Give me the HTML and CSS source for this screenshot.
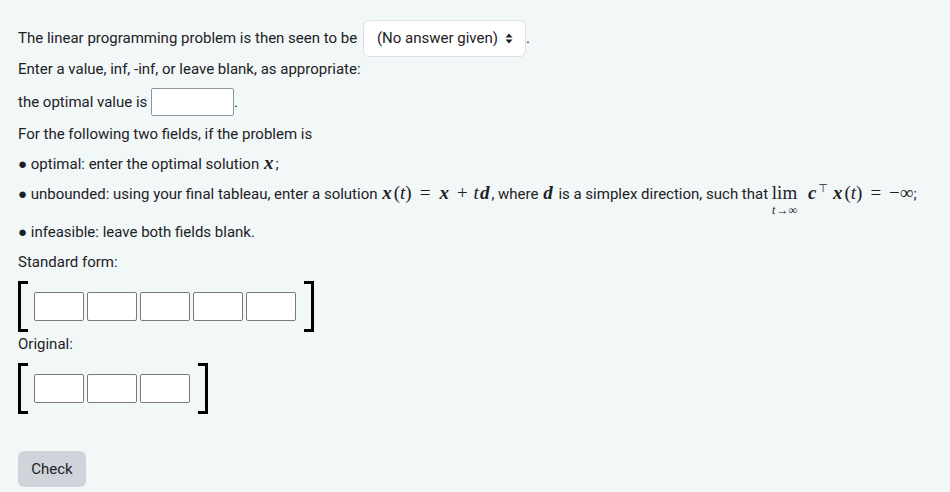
FILE: index.html
```html
<!DOCTYPE html>
<html lang="en">
<head>
    <meta charset="UTF-8">
    <title>Question</title>
    <link rel="stylesheet" href="styles.css">
</head>
<body>
<div class="qtext">
    <p class="first">The linear programming problem is then seen to be
        <span class="select">(No answer given)
            <svg class="caret" width="8" height="11" viewBox="0 0 8 11"><path d="M4 0.5 L7.5 4.5 L0.5 4.5 Z M4 10.5 L7.5 6.5 L0.5 6.5 Z" fill="#1d2125"/></svg>
        </span>.</p>
    <p>Enter a value, inf, -inf, or leave blank, as appropriate:</p>
    <p class="has-input">the optimal value is <span class="answer"></span>.</p>
    <p>For the following two fields, if the problem is</p>
    <p>&#9679; optimal: enter the optimal solution <span class="m"><span class="bv">x</span></span>;</p>
    <p class="tall">&#9679; unbounded: using your final tableau, enter a solution
        <span class="m"><span class="bv">x</span>(<i>t</i>)<span class="op">=</span><span class="bv">x</span><span class="op plus">+</span><i>t</i><span class="bv">d</span></span>, where <span class="m"><span class="bv">d</span></span> is a simplex direction, such that
        <span class="m"><span class="lim">lim<span class="under">t&#8202;&#8594;&#8734;</span></span> <span class="bv">c</span><sup>&#8868;</sup><span class="bv">x</span>(<i>t</i>)<span class="op">=</span>&#8722;&#8734;</span>;</p>
    <p>&#9679; infeasible: leave both fields blank.</p>
    <p>Standard form:</p>
    <div class="matrix">
        <span class="bracket left"></span>
        <span class="cell"></span>
        <span class="cell"></span>
        <span class="cell"></span>
        <span class="cell"></span>
        <span class="cell"></span>
        <span class="bracket right"></span>
    </div>
    <p class="label">Original:</p>
    <div class="matrix">
        <span class="bracket left"></span>
        <span class="cell"></span>
        <span class="cell"></span>
        <span class="cell"></span>
        <span class="bracket right"></span>
    </div>
</div>
<button class="check">Check</button>
</body>
</html>
```

FILE: styles.css
```css
/* question page */
body {
    font-family: Roboto, "Liberation Sans", sans-serif;
    font-size: 15px;
    color: #1d2125;
    background-color: #f2f7f8;
    margin: 0;
    padding: 20px 18px 0;
}
p {
    margin: 0 0 8px;
    line-height: 22px;
}
.first {
    margin-bottom: 1px;
    line-height: 37px;
    height: 37px;
}
.select {
    display: inline-flex;
    align-items: center;
    justify-content: space-between;
    box-sizing: border-box;
    height: 37px;
    width: 163px;
    padding: 0 12px 0 13px;
    margin-left: 2px;
    background-color: #fff;
    border: 1px solid #dee2e6;
    border-radius: 6px;
    vertical-align: top;
    line-height: 1;
    white-space: nowrap;
}
.has-input {
    line-height: 28px;
    height: 28px;
    margin-top: 7px;
    margin-bottom: 7px;
}
.answer {
    display: inline-block;
    box-sizing: border-box;
    width: 83px;
    height: 28px;
    vertical-align: top;
    background-color: #fff;
    border: 1px solid #8f959e;
    border-radius: 2px;
}
.m {
    font-family: "Liberation Serif", "DejaVu Serif", serif;
    font-size: 19px;
    line-height: 1;
    white-space: nowrap;
}
.bv {
    font-weight: bold;
    font-style: italic;
    margin: 0 2px 0 1px;
}
.op {
    margin: 0 8px;
}
.op.plus {
    margin: 0 6px;
}
.tall {
    height: 30px;
}
.lim {
    display: inline-flex;
    flex-direction: column;
    align-items: center;
    vertical-align: baseline;
    line-height: 19px;
    margin-right: 5px;
}
.under {
    font-size: 12px;
    font-style: italic;
    line-height: 10px;
    margin-top: 3px;
    white-space: nowrap;
}
sup {
    font-family: "DejaVu Sans", sans-serif;
    font-size: 11px;
    line-height: 0;
    margin-right: 4px;
}
.matrix {
    display: flex;
    align-items: center;
    gap: 3px;
    height: 51px;
    margin-bottom: 1px;
}
.bracket {
    box-sizing: border-box;
    width: 10px;
    height: 51px;
    border: 3px solid #000;
}
.bracket.left {
    border-right: none;
    margin-right: 3px;
}
.bracket.right {
    border-left: none;
    margin-left: 5px;
}
.cell {
    box-sizing: border-box;
    width: 50px;
    height: 29px;
    background-color: #fff;
    border: 1px solid #7a7a7a;
    border-radius: 2px;
}
.label {
    margin-bottom: 8px;
}
.check {
    margin-top: 36px;
    font-family: Roboto, "Liberation Sans", sans-serif;
    font-size: 15px;
    color: #1d2125;
    background-color: #ced4da;
    border: none;
    border-radius: 6px;
    width: 68px;
    height: 36px;
    padding: 0;
}
```
